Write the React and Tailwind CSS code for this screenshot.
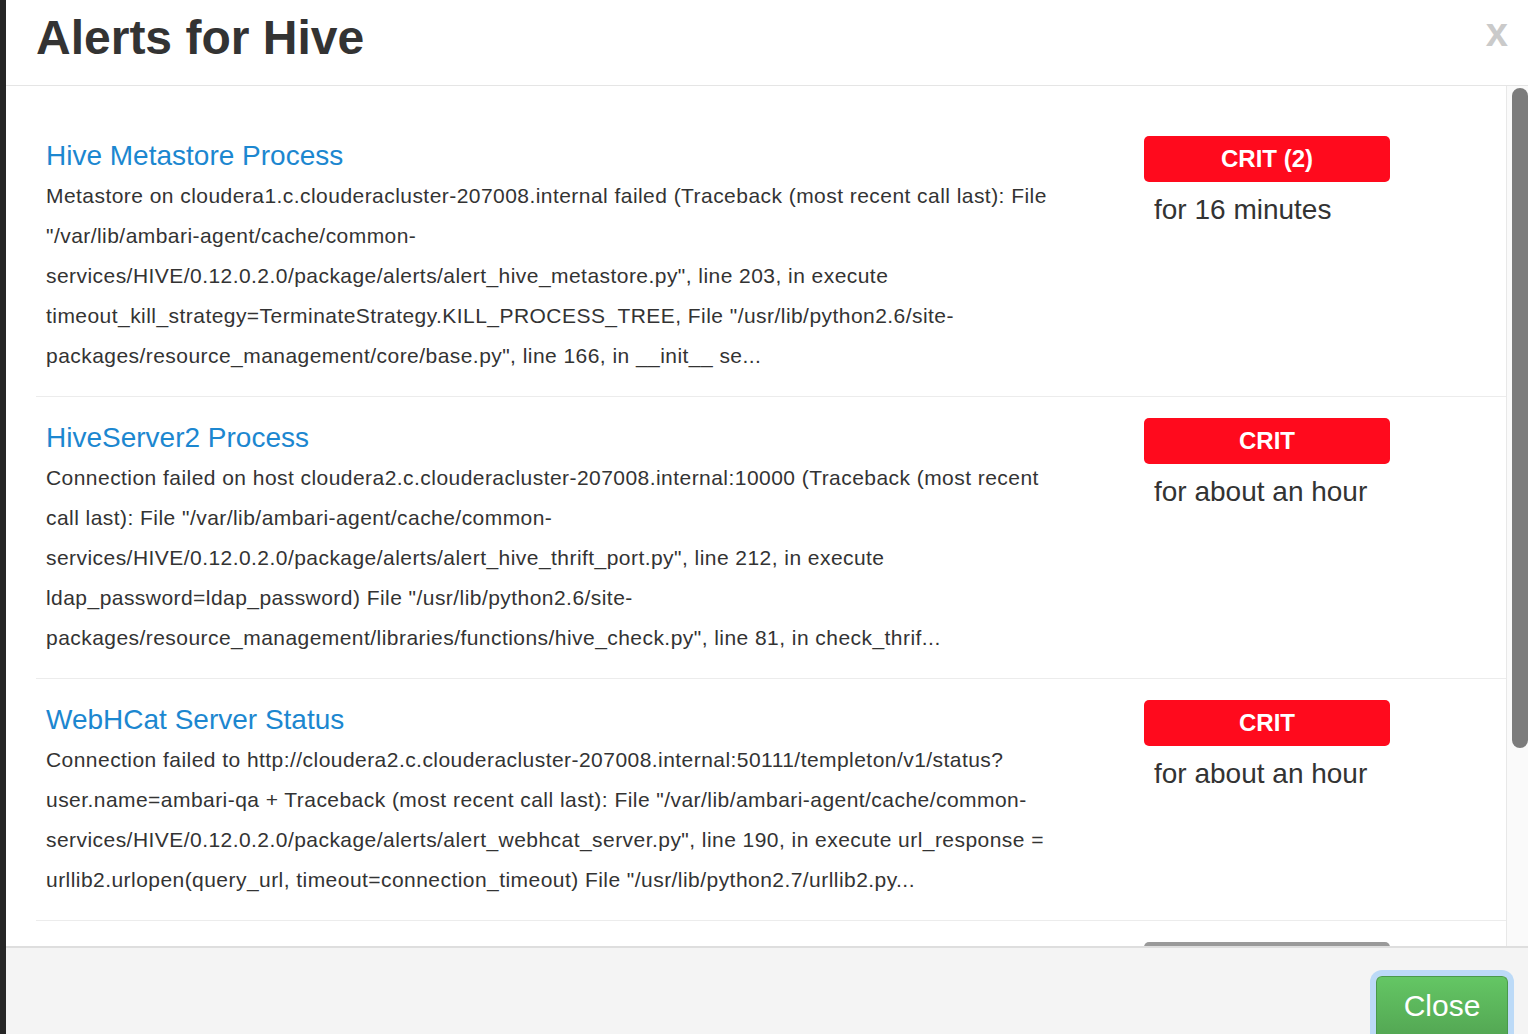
const ALERTS = [
  {
    title: 'Hive Metastore Process',
    badge: 'CRIT (2)',
    badgeColor: 'bg-[#ff0a1d]',
    since: 'for 16 minutes',
    lines: [
      'Metastore on cloudera1.c.clouderacluster-207008.internal failed (Traceback (most recent call last): File',
      '"/var/lib/ambari-agent/cache/common-',
      'services/HIVE/0.12.0.2.0/package/alerts/alert_hive_metastore.py", line 203, in execute',
      'timeout_kill_strategy=TerminateStrategy.KILL_PROCESS_TREE, File "/usr/lib/python2.6/site-',
      'packages/resource_management/core/base.py", line 166, in __init__ se...',
    ],
  },
  {
    title: 'HiveServer2 Process',
    badge: 'CRIT',
    badgeColor: 'bg-[#ff0a1d]',
    since: 'for about an hour',
    lines: [
      'Connection failed on host cloudera2.c.clouderacluster-207008.internal:10000 (Traceback (most recent',
      'call last): File "/var/lib/ambari-agent/cache/common-',
      'services/HIVE/0.12.0.2.0/package/alerts/alert_hive_thrift_port.py", line 212, in execute',
      'ldap_password=ldap_password) File "/usr/lib/python2.6/site-',
      'packages/resource_management/libraries/functions/hive_check.py", line 81, in check_thrif...',
    ],
  },
  {
    title: 'WebHCat Server Status',
    badge: 'CRIT',
    badgeColor: 'bg-[#ff0a1d]',
    since: 'for about an hour',
    lines: [
      'Connection failed to http://cloudera2.c.clouderacluster-207008.internal:50111/templeton/v1/status?',
      'user.name=ambari-qa + Traceback (most recent call last): File "/var/lib/ambari-agent/cache/common-',
      'services/HIVE/0.12.0.2.0/package/alerts/alert_webhcat_server.py", line 190, in execute url_response =',
      'urllib2.urlopen(query_url, timeout=connection_timeout) File "/usr/lib/python2.7/urllib2.py...',
    ],
  },
  {
    title: '',
    badge: '',
    badgeColor: 'bg-[#9a9a9a]',
    since: '',
    lines: [],
  },
];

function AlertRow({ alert }) {
  return (
    <div className="flex ml-[30px] border-b border-[#ececec] pl-[10px] pt-[21px] pb-[20px]">
      <div className="w-[1098px] shrink-0">
        <a className="block min-h-[40px] text-[28px] leading-[40px] text-[#1c87d0] cursor-pointer">{alert.title}</a>
        <div className="text-[21px] leading-[40px] tracking-[0.45px] text-[#333]">
          {alert.lines.map((l, i) => (
            <div key={i} className="whitespace-nowrap">{l}</div>
          ))}
        </div>
      </div>
      <div className="w-[246px] shrink-0">
        <div className={`flex h-[46px] items-center justify-center rounded-[5px] ${alert.badgeColor} text-[24px] font-bold text-white`}>
          {alert.badge}
        </div>
        <p className="pl-[10px] text-[28px] leading-[56px] text-[#333]">{alert.since}</p>
      </div>
    </div>
  );
}

export default function App() {
  return (
    <div className="flex h-[1034px] w-full overflow-hidden bg-white font-['Liberation_Sans',Arial,sans-serif]">
      <div className="w-[6px] shrink-0 bg-[#262626]" />
      <div className="flex min-w-0 flex-1 flex-col">
        {/* header */}
        <div className="flex h-[86px] shrink-0 items-start justify-between border-b border-[#e5e5e5] pl-[30px] pr-[20px]">
          <h3 className="pt-[14px] text-[48px] font-bold leading-[48px] text-[#333]">Alerts for Hive</h3>
          <button className="pt-[12px] text-[40px] font-bold leading-[40px] text-[#cacaca]">x</button>
        </div>

        {/* body */}
        <div className="flex min-h-0 flex-1">
          <div className="min-w-0 flex-1 overflow-hidden pt-[29px]">
            {ALERTS.map((a, i) => (
              <AlertRow key={i} alert={a} />
            ))}
          </div>
          <div className="w-[22px] shrink-0 border-l border-[#e8e8e8] bg-[#fafafa] pl-[5px] pt-[2px]">
            <div className="h-[660px] w-[16px] rounded-[8px] bg-[#7c7c7c]" />
          </div>
        </div>

        {/* footer */}
        <div className="flex h-[88px] shrink-0 justify-end overflow-hidden border-t-2 border-[#dedede] bg-[#f4f4f4] pr-[20px] pt-[28px]">
          <button className="h-[58px] w-[132px] rounded-t-[6px] border border-b-0 border-[#4a994a] bg-linear-to-b from-[#64c664] to-[#54a854] text-[30px] leading-[58px] text-white ring-[6px] ring-[#bcdaf7]">
            Close
          </button>
        </div>
      </div>
    </div>
  );
}
